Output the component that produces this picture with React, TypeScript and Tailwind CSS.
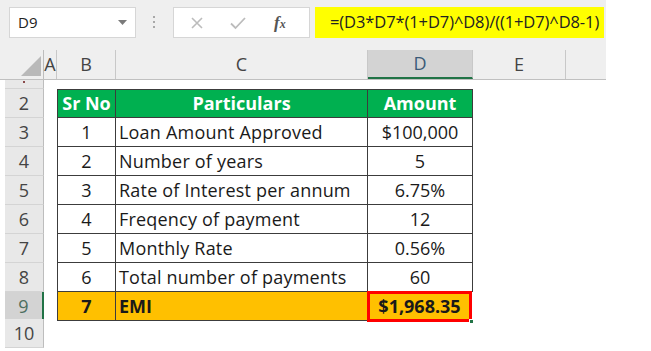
import React from 'react';

const font = { fontFamily: '"Open Sans", "Liberation Sans", sans-serif' };

interface Row {
  n: number;
  sr: string;
  label: string;
  amount: string;
}

const rows: Row[] = [
  { n: 3, sr: '1', label: 'Loan Amount Approved', amount: '$100,000' },
  { n: 4, sr: '2', label: 'Number of years', amount: '5' },
  { n: 5, sr: '3', label: 'Rate of Interest per annum', amount: '6.75%' },
  { n: 6, sr: '4', label: 'Freqency of payment', amount: '12' },
  { n: 7, sr: '5', label: 'Monthly Rate', amount: '0.56%' },
  { n: 8, sr: '6', label: 'Total number of payments', amount: '60' },
];

function RowHead({ n, active }: { n: number | string; active?: boolean }) {
  return (
    <>
      <div className="w-[5px] shrink-0" />
      <div
        className={`w-[39px] shrink-0 flex items-center justify-center border-b border-b-[#d4d4d4] text-[18px] ${
          active
            ? 'bg-[#d3d3d3] border-r-2 border-r-[#217346] text-[#4d6e5e]'
            : 'bg-[#e8e8e8] border-r border-r-[#bdbdbd] text-[#444]'
        }`}
      >
        {n}
      </div>
      <div className="w-[13px] shrink-0" />
    </>
  );
}

export default function App() {
  return (
    <div className="w-[651px] h-[351px] bg-white overflow-hidden text-[#1a1a1a]" style={font}>
      {/* toolbar */}
      <div className="w-[606px] h-[50px] bg-[#efefef] flex items-start pt-[7px]">
        <div className="ml-[9px] w-[127px] h-[31px] bg-white border border-[#d6d6d6] flex items-center justify-between pl-[8px] pr-[8px]">
          <span className="text-[15px] text-[#222]">D9</span>
          <svg width="9" height="5" viewBox="0 0 9 5">
            <path d="M0 0 H9 L4.5 5 Z" fill="#7a7a7a" />
          </svg>
        </div>
        <div className="ml-[17px] mt-[9px] flex flex-col gap-[3px]">
          <div className="w-[2px] h-[2px] bg-[#a8a8a8]" />
          <div className="w-[2px] h-[2px] bg-[#a8a8a8]" />
          <div className="w-[2px] h-[2px] bg-[#a8a8a8]" />
        </div>
        <div className="ml-[18px] w-[137px] h-[31px] bg-white border border-[#d6d6d6] flex items-center pl-[16px]">
          <svg width="14" height="14" viewBox="0 0 14 14">
            <path d="M2 2 L12 12 M12 2 L2 12" stroke="#bcbcbc" strokeWidth="1.6" />
          </svg>
          <svg className="ml-[26px]" width="16" height="14" viewBox="0 0 16 14">
            <path d="M1 7.5 L5.5 12 L15 2" stroke="#bcbcbc" strokeWidth="1.8" fill="none" />
          </svg>
          <span
            className="ml-[28px] text-[17px] italic font-bold text-[#555]"
            style={{ fontFamily: '"Liberation Serif", serif' }}
          >
            f<span className="text-[12px]">x</span>
          </span>
        </div>
        <div className="ml-[5px] w-[289px] h-[31px] bg-[#ffff00] flex items-center pl-[15px] text-[16.5px] text-[#222] whitespace-nowrap tracking-[-0.1px]">
          =(D3*D7*(1+D7)^D8)/((1+D7)^D8-1)
        </div>
      </div>

      {/* column headers */}
      <div className="w-[606px] h-[30px] bg-[#efefef] flex border-b border-[#c0c0c0] text-[18px] text-[#444]">
        <div className="w-[44px] shrink-0 border-r border-[#bdbdbd] flex items-end justify-end pr-[2px] pb-[3px]">
          <svg width="20" height="20" viewBox="0 0 20 20">
            <path d="M20 0 V20 H0 Z" fill="#b9b9b9" />
          </svg>
        </div>
        <div className="w-[13px] shrink-0 border-r border-[#c8c8c8] flex items-center justify-center">A</div>
        <div className="w-[59px] shrink-0 border-r border-[#c8c8c8] flex items-center justify-center">B</div>
        <div className="w-[252px] shrink-0 border-r border-[#c8c8c8] flex items-center justify-center">C</div>
        <div className="w-[105px] shrink-0 border-r border-[#c8c8c8] bg-[#d3d3d3] border-b-2 border-b-[#217346] flex items-center justify-center text-[#3a5a78]">
          D
        </div>
        <div className="w-[93px] shrink-0 border-r border-[#c8c8c8] flex items-center justify-center">E</div>
        <div className="flex-1" />
      </div>

      {/* row 1 (scrolled, only its bottom edge shows) */}
      <div className="flex h-[9px]">
        <div className="w-[5px] shrink-0" />
        <div className="w-[39px] shrink-0 bg-[#e8e8e8] border-r border-[#bdbdbd] border-b border-b-[#d4d4d4] flex justify-center pt-[1px]">
          <div className="w-[2px] h-[2px] bg-[#8a4a4a]" />
        </div>
      </div>

      {/* row 2 header */}
      <div className="flex h-[29px]">
        <RowHead n={2} />
        <div className="w-[59px] shrink-0 bg-[#00b050] border border-[#3c3c3c] flex items-center justify-center font-bold text-white text-[18px]">
          Sr No
        </div>
        <div className="w-[252px] shrink-0 bg-[#00b050] border-y border-r border-[#3c3c3c] flex items-center justify-center font-bold text-white text-[18px]">
          Particulars
        </div>
        <div className="w-[105px] shrink-0 bg-[#00b050] border-y border-r border-[#3c3c3c] flex items-center justify-center font-bold text-white text-[18px]">
          Amount
        </div>
      </div>

      {rows.map((r) => (
        <div key={r.n} className="flex h-[29px]">
          <RowHead n={r.n} />
          <div className="w-[59px] shrink-0 border-x border-b border-[#3c3c3c] flex items-center justify-center text-[18px]">
            {r.sr}
          </div>
          <div className="w-[252px] shrink-0 border-r border-b border-[#3c3c3c] flex items-center pl-[3px] text-[18px] whitespace-nowrap tracking-[0.2px]">
            {r.label}
          </div>
          <div className="w-[105px] shrink-0 border-r border-b border-[#3c3c3c] flex items-center justify-center text-[18px]">
            {r.amount}
          </div>
        </div>
      ))}

      {/* row 9 EMI */}
      <div className="flex h-[29px]">
        <RowHead n={9} active />
        <div className="w-[59px] shrink-0 bg-[#ffc000] border-x border-b border-[#3c3c3c] flex items-center justify-center text-[18px] font-bold">
          7
        </div>
        <div className="w-[252px] shrink-0 bg-[#ffc000] border-r border-b border-[#3c3c3c] flex items-center pl-[3px] text-[18px] font-bold">
          EMI
        </div>
        <div className="relative w-[105px] shrink-0 bg-[#ffc000] border-[3px] border-[#ff0000] -ml-px mt-[-1px] h-[31px] flex items-center justify-center text-[18px] font-bold">
          $1,968.35
          <div className="absolute right-[-5px] bottom-[-5px] w-[5px] h-[5px] bg-[#217346] border border-white" />
        </div>
      </div>

      {/* row 10 */}
      <div className="flex h-[29px] mt-[-2px]">
        <RowHead n={10} />
      </div>
    </div>
  );
}
